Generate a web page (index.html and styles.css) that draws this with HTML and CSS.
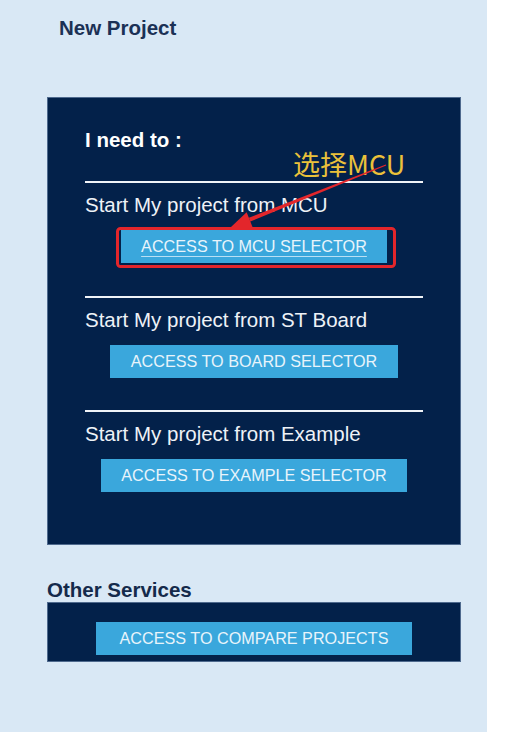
FILE: index.html
```html
<!DOCTYPE html>
<html lang="en">
<head>
<meta charset="utf-8">
<title>New Project</title>
<link rel="stylesheet" href="styles.css">
</head>
<body>
<div class="page">
  <h1 class="page-title">New Project</h1>
  <section class="panel panel-main">
    <h2 class="panel-title">I need to :</h2>
    <div class="option">
      <p class="option-label">Start My project from MCU</p>
      <a class="btn btn-active" href="#">ACCESS TO MCU SELECTOR</a>
    </div>
    <div class="option">
      <p class="option-label">Start My project from ST Board</p>
      <a class="btn" href="#">ACCESS TO BOARD SELECTOR</a>
    </div>
    <div class="option">
      <p class="option-label">Start My project from Example</p>
      <a class="btn" href="#">ACCESS TO EXAMPLE SELECTOR</a>
    </div>
    <svg class="annotation" width="414" height="200" viewBox="0 0 414 200">
      <rect x="69.5" y="130.5" width="277" height="38" rx="3" fill="none" stroke="#e3262b" stroke-width="3"/>
      <text class="annotation-text" x="245" y="76.5">选择MCU</text>
      <polygon points="337.8,66.5 200.9,119.7 202.3,123.5 338.2,67.5" fill="#e3262b"/>
      <polygon points="183,129 204.5,129 201.6,121.6 198.6,114.2" fill="#e3262b"/>
    </svg>
  </section>
  <h2 class="section-title">Other Services</h2>
  <section class="panel panel-other">
    <a class="btn btn-wide" href="#">ACCESS TO COMPARE PROJECTS</a>
  </section>
</div>
</body>
</html>
```

FILE: styles.css
```css
html, body {
  margin: 0;
  padding: 0;
  background: #ffffff;
}

body {
  font-family: "Liberation Sans", Arial, sans-serif;
}

.page {
  width: 487px;
  min-height: 732px;
  box-sizing: border-box;
  background: #d9e8f5;
  padding-top: 16px;
  overflow: hidden;
}

.page-title {
  margin: 0 0 57px 59px;
  font-size: 20.5px;
  line-height: 24px;
  font-weight: bold;
  color: #1b3155;
}

.panel {
  margin-left: 47px;
  width: 414px;
  box-sizing: border-box;
  background: #03214a;
  border: 1px solid #4f6a8e;
}

.panel-main {
  position: relative;
  padding: 30px 37px 19px;
}

.panel-title {
  margin: 0 0 29px;
  font-size: 20.5px;
  line-height: 24px;
  font-weight: bold;
  color: #ffffff;
}

.option {
  display: flex;
  flex-direction: column;
  align-items: center;
  border-top: 2px solid #f0f3f7;
  padding: 10px 0 32.5px;
}

.option-label {
  align-self: stretch;
  margin: 0 0 13px;
  font-size: 20.5px;
  line-height: 24px;
  color: #eef2f7;
}

.btn {
  display: block;
  height: 33px;
  line-height: 33px;
  padding: 0 20.5px;
  background: #3aa7dc;
  color: #e8f4fb;
  font-size: 16.2px;
  text-decoration: none;
  white-space: nowrap;
}

.btn-active {
  text-decoration: underline;
  text-decoration-color: #b9e0f5;
  text-underline-offset: 4px;
}

.btn-wide {
  padding: 0 23.5px;
}

.annotation {
  position: absolute;
  left: 0;
  top: 0;
  overflow: visible;
  pointer-events: none;
}

.annotation-text {
  font-family: "Noto Sans CJK SC", "Noto Sans", sans-serif;
  font-size: 27px;
  fill: #ebc13a;
}

.section-title {
  margin: 33.5px 0 0 47px;
  font-size: 20.5px;
  line-height: 24px;
  font-weight: bold;
  color: #142a4b;
}

.panel-other {
  display: flex;
  justify-content: center;
  padding: 19px 0 6px;
}
```
